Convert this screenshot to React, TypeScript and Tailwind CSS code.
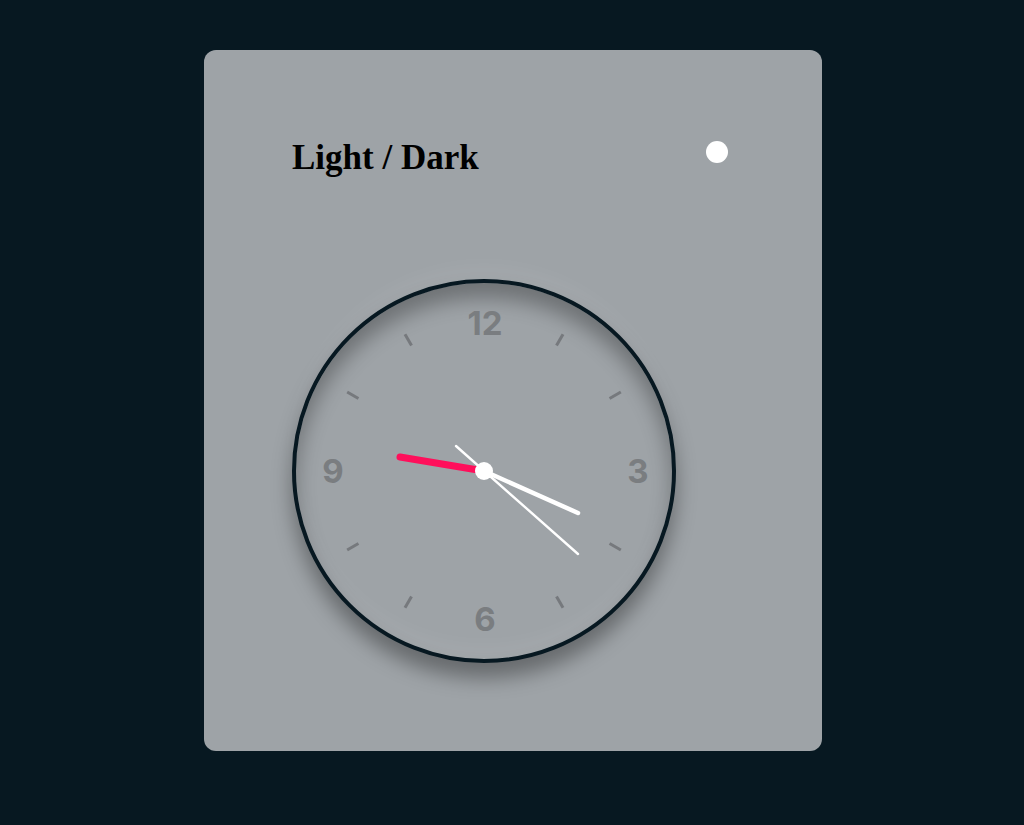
import React from "react";

const C = 188;

// angles in degrees, clockwise from 12
function polar(deg: number, r: number) {
  const a = (deg * Math.PI) / 180;
  return { x: C + r * Math.sin(a), y: C - r * Math.cos(a) };
}

const ticks = [30, 60, 120, 150, 210, 240, 300, 330];

const numbers = [
  { label: "12", deg: 0, dx: 1 },
  { label: "3", deg: 90, dx: 6 },
  { label: "6", deg: 180, dx: 1 },
  { label: "9", deg: 270, dx: -3 },
];

function ClockFace() {
  return (
    <svg width="376" height="376" viewBox="0 0 376 376">
      {ticks.map((d) => {
        const a = polar(d, 145);
        const b = polar(d, 158);
        return (
          <line
            key={d}
            x1={a.x}
            y1={a.y}
            x2={b.x}
            y2={b.y}
            stroke="#76797d"
            strokeWidth="3"
          />
        );
      })}
      {numbers.map((n) => {
        const p = polar(n.deg, 148);
        return (
          <text
            key={n.label}
            x={p.x + n.dx}
            y={p.y + 3}
            textAnchor="middle"
            dominantBaseline="middle"
            fill="#7a7d80"
            style={{ fontFamily: "Inter, 'Noto Sans', sans-serif", fontWeight: 700, fontSize: 33 }}
          >
            {n.label}
          </text>
        );
      })}
      {/* hour */}
      <line x1={C} y1={C} x2={104} y2={174} stroke="#ff0f5b" strokeWidth="7" strokeLinecap="round" />
      {/* minute */}
      <line x1={C} y1={C} x2={282} y2={230} stroke="#ffffff" strokeWidth="4.5" strokeLinecap="round" />
      {/* second */}
      <line x1={160} y1={163} x2={282} y2={271} stroke="#ffffff" strokeWidth="2.4" strokeLinecap="round" />
      <circle cx={C} cy={C} r="9" fill="#ffffff" />
    </svg>
  );
}

export default function App() {
  return (
    <div className="min-h-screen w-full bg-[#071821] pt-[50px]">
      <div className="ml-[204px] w-[618px] h-[701px] rounded-[12px] bg-[#9ea3a7] px-[88px] pt-[88px]">
        <div className="flex items-start justify-between">
          <h1 className="mt-[2px] text-[35px] leading-none font-bold text-black [font-family:'Liberation_Serif','Times_New_Roman',serif]">
            Light / Dark
          </h1>
          <div className="mt-[3px] mr-[6px] h-[22px] w-[22px] rounded-full bg-white" />
        </div>
        <div className="mt-[104px] h-[384px] w-[384px] rounded-full border-4 border-[#071821] bg-[#9ea3a7] shadow-[0_15px_20px_rgba(0,0,0,0.35),inset_0_15px_20px_rgba(0,0,0,0.3),0_-15px_15px_rgba(255,255,255,0.05),inset_0_-15px_15px_rgba(255,255,255,0.05)]">
          <ClockFace />
        </div>
      </div>
    </div>
  );
}
